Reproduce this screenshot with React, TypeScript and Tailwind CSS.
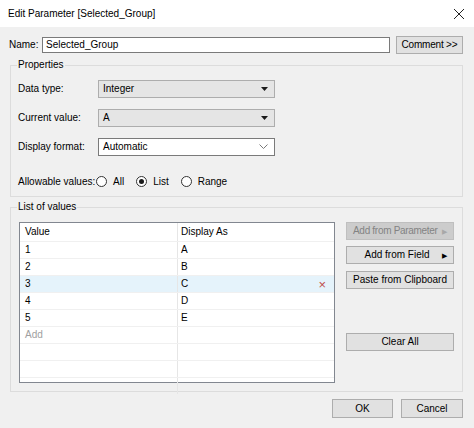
import { ReactNode } from "react";

const rows = [
  { value: "1", label: "A" },
  { value: "2", label: "B" },
  { value: "3", label: "C" },
  { value: "4", label: "D" },
  { value: "5", label: "E" },
];

function Button({ children, className = "" }: { children: ReactNode; className?: string }) {
  return (
    <div className={`relative flex items-center justify-center border border-[#adadad] bg-[#e1e1e1] ${className}`}>
      {children}
    </div>
  );
}

function Select({ value, flat }: { value: string; flat?: boolean }) {
  return (
    <div
      className={`flex h-[18px] w-[177px] items-center justify-between pl-[4px] pr-[6px] ${
        flat ? "border border-[#7a7a7a] bg-white" : "border border-[#adadad] bg-[#e5e5e5]"
      }`}
    >
      <span>{value}</span>
      {flat ? (
        <svg width="9" height="6" viewBox="0 0 9 6">
          <path d="M0.5 0.5 L4.5 4.5 L8.5 0.5" fill="none" stroke="#7a7a7a" strokeWidth="1" />
        </svg>
      ) : (
        <svg width="7" height="4" viewBox="0 0 7 4">
          <path d="M0 0 H7 L3.5 4 Z" fill="#1a1a1a" />
        </svg>
      )}
    </div>
  );
}

function Radio({ label, checked }: { label: string; checked?: boolean }) {
  return (
    <div className="flex items-center gap-[6px]">
      <div className="flex h-[11px] w-[11px] items-center justify-center rounded-full border border-[#333] bg-white">
        {checked && <div className="h-[5px] w-[5px] rounded-full bg-[#1a1a1a]" />}
      </div>
      <span>{label}</span>
    </div>
  );
}

export default function App() {
  return (
    <div
      className="h-[428px] w-[474px] overflow-hidden whitespace-nowrap bg-[#f0f0f0] text-[10px] leading-none text-black"
      style={{ fontFamily: '"Liberation Sans", Arial, sans-serif' }}
    >
      {/* title bar */}
      <div className="flex h-[27px] items-center justify-between bg-white pl-[8px] pr-[10px]">
        <span>Edit Parameter [Selected_Group]</span>
        <svg width="10" height="10" viewBox="0 0 10 10">
          <path d="M0 0 L10 10 M10 0 L0 10" stroke="#222" strokeWidth="1" />
        </svg>
      </div>

      {/* name row */}
      <div className="mt-[9px] flex items-center pl-[9px]">
        <span className="w-[33px] shrink-0">Name:</span>
        <div className="flex h-[16px] w-[348px] shrink-0 items-center border border-[#7a7a7a] bg-white pl-[3px]">Selected_Group</div>
        <Button className="ml-[6px] h-[18px] w-[67px] shrink-0 tracking-[-0.2px]">Comment &gt;&gt;</Button>
      </div>

      {/* properties */}
      <div className="relative mx-[10px] mt-[11px] h-[132px] w-[453px] border border-[#dcdcdc] px-[7px]">
        <span className="absolute left-[6px] top-[-6px] bg-[#f0f0f0] px-[1px]">Properties</span>
        <div className="mt-[14px] flex flex-col gap-[11px]">
          <div className="flex items-center">
            <span className="w-[80px] shrink-0">Data type:</span>
            <Select value="Integer" />
          </div>
          <div className="flex items-center">
            <span className="w-[80px] shrink-0">Current value:</span>
            <Select value="A" />
          </div>
          <div className="flex items-center">
            <span className="w-[80px] shrink-0">Display format:</span>
            <Select value="Automatic" flat />
          </div>
        </div>
        <div className="mt-[20px] flex items-center">
          <span className="w-[78px] shrink-0">Allowable values:</span>
          <div className="flex items-center gap-[12px]">
            <Radio label="All" />
            <Radio label="List" checked />
            <Radio label="Range" />
          </div>
        </div>
      </div>

      {/* list of values */}
      <div className="relative mx-[10px] mt-[10px] h-[185px] w-[453px] border border-[#dcdcdc] pl-[8px]">
        <span className="absolute left-[6px] top-[-6px] bg-[#f0f0f0] px-[1px]">List of values</span>
        <div className="mt-[14px] flex">
          <div className="h-[161px] w-[316px] shrink-0 border border-[#828790] bg-white">
            <div className="flex h-[18px] items-center">
              <div className="w-[157px] pl-[5px]">Value</div>
              <div className="h-full border-l border-[#e6e6e6] pl-[3px] leading-[18px]">Display As</div>
            </div>
            {rows.map((r) => (
              <div
                key={r.value}
                className={`flex h-[17px] items-center border-t border-[#f0f0f0] ${r.value === "3" ? "bg-[#e5f3fb]" : ""}`}
              >
                <div className="w-[157px] pl-[5px]">{r.value}</div>
                <div className="flex h-full flex-1 items-center justify-between border-l border-[#e6e6e6] pl-[3px] pr-[8px]">
                  <span>{r.label}</span>
                  {r.value === "3" && <span className="text-[13px] text-[#c0504d]">×</span>}
                </div>
              </div>
            ))}
            <div className="flex h-[17px] items-center border-t border-[#f0f0f0]">
              <div className="w-[157px] pl-[5px] text-[#a0a0a0]">Add</div>
              <div className="h-full border-l border-[#e6e6e6]" />
            </div>
            {[0, 1, 2].map((i) => (
              <div key={i} className="flex h-[17px] border-t border-[#f0f0f0]">
                <div className="w-[157px]" />
                <div className="h-full border-l border-[#e6e6e6]" />
              </div>
            ))}
          </div>

          <div className="ml-[11px] flex w-[108px] shrink-0 flex-col">
            <div className="relative flex h-[18px] items-center border border-[#bfbfbf] bg-[#cccccc] pl-[6px] text-[#838383]">
              <span className="tracking-[-0.3px]">Add from Parameter</span>
              <span className="absolute right-[6px] text-[7px] text-[#a8a8a8]">▶</span>
            </div>
            <Button className="mt-[6px] h-[18px]">
              <span className="ml-[-6px]">Add from Field</span>
              <span className="absolute right-[6px] text-[7px]">▶</span>
            </Button>
            <Button className="mt-[7px] h-[18px] border-[#0078d7]">Paste from Clipboard</Button>
            <Button className="mt-[44px] h-[18px]">Clear All</Button>
          </div>
        </div>
      </div>

      {/* footer */}
      <div className="mt-[7px] flex justify-end gap-[8px] pr-[11px]">
        <Button className="h-[19px] w-[61px]">OK</Button>
        <Button className="h-[19px] w-[62px]">Cancel</Button>
      </div>
    </div>
  );
}
